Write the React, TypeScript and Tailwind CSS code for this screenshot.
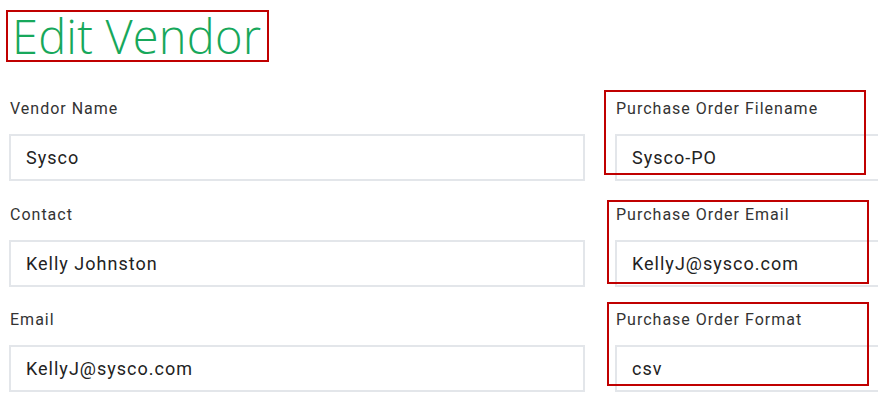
import React from "react";

const fields: [string, string][] = [
  ["Vendor Name", "Sysco"],
  ["Purchase Order Filename", "Sysco-PO"],
  ["Contact", "Kelly Johnston"],
  ["Purchase Order Email", "KellyJ@sysco.com"],
  ["Email", "KellyJ@sysco.com"],
  ["Purchase Order Format", "csv"],
];

function Field({ label, value }: { label: string; value: string }) {
  return (
    <div className="flex flex-col">
      <label className="text-[16px] leading-[24px] tracking-[1px] text-[#333333] pl-[1px]">{label}</label>
      <div className="mt-[13px] h-[47px] border-2 border-[#e3e6ea] bg-white flex items-center px-[15px] text-[18px] tracking-[1px] text-[#222222]">
        {value}
      </div>
    </div>
  );
}

export default function App() {
  return (
    <div
      className="relative w-[878px] h-[401px] overflow-hidden bg-white"
      style={{ fontFamily: "Roboto, 'Liberation Sans', sans-serif" }}
    >
      <h1
        className="pl-[12px] pt-[13px] text-[47px] leading-none font-light tracking-[0.2px] text-[#17a85b]"
        style={{ fontFamily: "'Open Sans', 'Noto Sans', sans-serif" }}
      >
        Edit Vendor
      </h1>
      <div className="mt-[37px] ml-[9px] grid grid-cols-[576px_300px] gap-x-[30px] gap-y-[21.5px]">
        {fields.map(([l, v]) => (
          <Field key={l} label={l} value={v} />
        ))}
      </div>

      {/* annotation boxes */}
      <div className="absolute left-[6px] top-[10px] w-[263px] h-[52px] border-2 border-[#c00000]" />
      <div className="absolute left-[604px] top-[90px] w-[262px] h-[85px] border-2 border-[#c00000]" />
      <div className="absolute left-[607px] top-[200px] w-[262px] h-[84px] border-2 border-[#c00000]" />
      <div className="absolute left-[607px] top-[302px] w-[262px] h-[84px] border-2 border-[#c00000]" />
    </div>
  );
}
